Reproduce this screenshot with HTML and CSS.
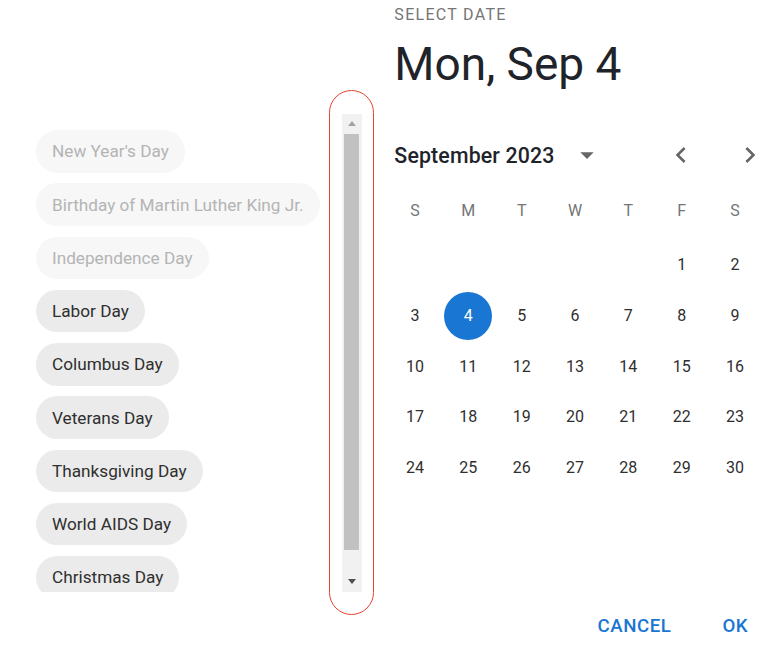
FILE: index.html
```html
<!DOCTYPE html>
<html lang="en">
<head>
<meta charset="utf-8">
<title>Select date</title>
<link rel="stylesheet" href="styles.css">
</head>
<body>
<div class="page">
  <div class="left">
    <div class="list">
      <div class="chips">
        <span class="chip disabled">New Year's Day</span>
        <span class="chip disabled">Birthday of Martin Luther King Jr.</span>
        <span class="chip disabled">Independence Day</span>
        <span class="chip">Labor Day</span>
        <span class="chip">Columbus Day</span>
        <span class="chip">Veterans Day</span>
        <span class="chip">Thanksgiving Day</span>
        <span class="chip">World AIDS Day</span>
        <span class="chip">Christmas Day</span>
      </div>
    </div>
    <div class="highlight">
      <div class="scrollbar">
        <div class="sb-btn">
          <svg class="sb-arrow up" viewBox="0 0 8 5" width="8" height="5"><path d="M0 5 4 0 8 5z"/></svg>
        </div>
        <div class="sb-track"><div class="sb-thumb"></div></div>
        <div class="sb-btn">
          <svg class="sb-arrow down" viewBox="0 0 8 5" width="8" height="5"><path d="M0 0 4 5 8 0z"/></svg>
        </div>
      </div>
    </div>
  </div>

  <div class="picker">
    <div class="overline">SELECT DATE</div>
    <div class="title">Mon, Sep 4</div>

    <div class="cal-header">
      <span class="month">September 2023</span>
      <svg class="icon dropdown" viewBox="0 0 24 24"><path d="M7 10l5 5 5-5z"/></svg>
      <div class="nav">
        <svg class="icon" viewBox="0 0 24 24"><path d="M15.41 7.41 14 6l-6 6 6 6 1.41-1.41L10.83 12z"/></svg>
        <svg class="icon" viewBox="0 0 24 24"><path d="M10 6 8.59 7.41 13.17 12l-4.58 4.59L10 18l6-6z"/></svg>
      </div>
    </div>

    <div class="weekdays">
      <span>S</span><span>M</span><span>T</span><span>W</span><span>T</span><span>F</span><span>S</span>
    </div>

    <div class="days">
      <span></span><span></span><span></span><span></span><span></span>
      <span>1</span><span>2</span>
      <span>3</span><span><b class="selected">4</b></span><span>5</span><span>6</span><span>7</span><span>8</span><span>9</span>
      <span>10</span><span>11</span><span>12</span><span>13</span><span>14</span><span>15</span><span>16</span>
      <span>17</span><span>18</span><span>19</span><span>20</span><span>21</span><span>22</span><span>23</span>
      <span>24</span><span>25</span><span>26</span><span>27</span><span>28</span><span>29</span><span>30</span>
    </div>

    <div class="actions">
      <button class="btn">CANCEL</button>
      <button class="btn">OK</button>
    </div>
  </div>
</div>
</body>
</html>
```

FILE: styles.css
```css
html, body {
  margin: 0;
  padding: 0;
  background: #ffffff;
}

body {
  font-family: Roboto, "Noto Sans", "Liberation Sans", sans-serif;
}

.page {
  display: flex;
  width: 778px;
  height: 668px;
  overflow: hidden;
}

/* ---------- left: chip list + scrollbar ---------- */
.left {
  display: flex;
  align-items: flex-start;
  flex-shrink: 0;
}

.list {
  width: 329px;
  height: 478px;
  margin-top: 114px;
  padding: 16px 0 0 36px;
  box-sizing: border-box;
  overflow: hidden;
}

.chips {
  display: flex;
  flex-direction: column;
  align-items: flex-start;
  gap: 10.6px;
}

.chip {
  display: inline-flex;
  align-items: center;
  flex-shrink: 0;
  height: 42.67px;
  padding: 0 16px;
  border-radius: 21.33px;
  background: #ebebeb;
  color: #2f2f2f;
  font-size: 17.2px;
  white-space: nowrap;
}

.chip.disabled {
  background: #f7f7f7;
  color: #b4b4b4;
}

.highlight {
  margin-top: 90px;
  padding: 22.5px 11.5px;
  border: 1.5px solid #e8432d;
  border-radius: 24px;
}

.scrollbar {
  width: 20px;
  height: 478px;
  background: #f1f1f1;
  display: flex;
  flex-direction: column;
}

.sb-btn {
  height: 20px;
  display: flex;
  align-items: center;
  justify-content: center;
  flex-shrink: 0;
}

.sb-arrow.up { fill: #a3a3a3; }
.sb-arrow.down { fill: #505050; }

.sb-track {
  flex: 1;
  padding: 0 2.67px;
}

.sb-thumb {
  height: 416px;
  background: #c1c1c1;
}

/* ---------- right: date picker ---------- */
.picker {
  flex: 1;
  margin-left: 14.33px;
  display: flex;
  flex-direction: column;
}

.overline {
  padding-left: 6px;
  font-size: 16px;
  line-height: 29px;
  letter-spacing: 1.3px;
  color: #757575;
}

.title {
  padding-left: 6px;
  font-size: 46px;
  line-height: 70px;
  color: #1f242b;
}

.cal-header {
  margin-top: 28px;
  height: 56px;
  padding-left: 6px;
  display: flex;
  align-items: center;
}

.month {
  font-size: 21.33px;
  font-weight: 500;
  letter-spacing: 0.15px;
  color: #1f242b;
}

.icon {
  width: 32px;
  height: 32px;
  fill: #666666;
  flex-shrink: 0;
}

.dropdown {
  margin-left: 16px;
}

.nav {
  margin-left: auto;
  padding-right: 12.4px;
  display: flex;
  gap: 36.2px;
}

.weekdays {
  margin-top: 1.33px;
  width: 373.33px;
  height: 53.33px;
  display: grid;
  grid-template-columns: repeat(7, 1fr);
  align-items: center;
  justify-items: center;
  font-size: 16px;
  color: #757575;
}

.days {
  margin-top: 2px;
  width: 373.33px;
  display: grid;
  grid-template-columns: repeat(7, 1fr);
  grid-auto-rows: 50.67px;
  font-size: 16px;
  color: #2f2f2f;
}

.days span {
  display: flex;
  align-items: center;
  justify-content: center;
}

.selected {
  width: 48px;
  height: 48px;
  border-radius: 50%;
  background: #1976d2;
  color: #ffffff;
  font-weight: 400;
  display: flex;
  align-items: center;
  justify-content: center;
}

.actions {
  margin-top: auto;
  padding-bottom: 18px;
  display: flex;
  justify-content: flex-end;
  gap: 10.67px;
}

.btn {
  height: 48px;
  min-width: 85.33px;
  padding: 0 10.67px;
  border: 0;
  background: transparent;
  font-family: Roboto, "Noto Sans", "Liberation Sans", sans-serif;
  font-size: 18.67px;
  font-weight: 500;
  letter-spacing: 0.53px;
  color: #1976d2;
}
```
